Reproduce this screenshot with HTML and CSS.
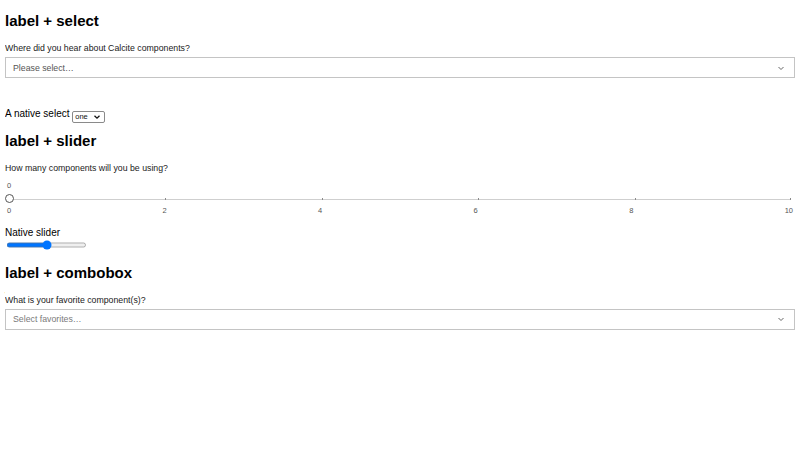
FILE: index.html
```html
<!DOCTYPE html>
<html lang="en">
<head>
<meta charset="utf-8">
<title>Calcite labels</title>
<link rel="stylesheet" href="styles.css">
</head>
<body>
<h2 class="title first">label + select</h2>
<div class="field">
  <div class="label-text">Where did you hear about Calcite components?</div>
  <div class="box">
    <span class="placeholder">Please select…</span>
    <svg class="chev" viewBox="0 0 10 10" width="10" height="10"><path d="M2.5 4 L5 6.5 L7.5 4" fill="none" stroke="#555" stroke-width="0.9"/></svg>
  </div>
</div>
<div class="native-row">A native select <span class="nsel"><select class="native-select"><option>one</option><option>two</option></select><svg class="nchev" viewBox="0 0 8 8" width="8" height="8"><path d="M1.5 2.8 L4 5.2 L6.5 2.8" fill="none" stroke="#111" stroke-width="1.3"/></svg></span></div>

<h2 class="title">label + slider</h2>
<div class="field">
  <div class="label-text">How many components will you be using?</div>
  <div class="slider">
    <div class="handle-label">0</div>
    <div class="track">
      <span class="tick t0"></span><span class="tick t2"></span><span class="tick t4"></span><span class="tick t6"></span><span class="tick t8"></span><span class="tick t10"></span>
      <span class="handle"></span>
    </div>
    <div class="tick-labels">
      <span>0</span><span>2</span><span>4</span><span>6</span><span>8</span><span>10</span>
    </div>
  </div>
</div>
<div class="native-slider">
  <div class="native-text">Native slider</div>
  <input class="range" type="range" min="0" max="100" value="50">
</div>

<h2 class="title">label + combobox</h2>
<div class="field">
  <div class="label-text">What is your favorite component(s)?</div>
  <div class="box combo">
    <span class="placeholder light">Select favorites…</span>
    <svg class="chev" viewBox="0 0 10 10" width="10" height="10"><path d="M2.5 4 L5 6.5 L7.5 4" fill="none" stroke="#555" stroke-width="0.9"/></svg>
  </div>
</div>
</body>
</html>
```
FILE: styles.css
```css
html, body { background: #fff; }
body {
  margin: 5px;
  font-family: "Liberation Sans", Arial, sans-serif;
  color: #000;
}
.title {
  font-size: 15px;
  font-weight: bold;
  margin: 9.5px 0 12.5px;
  line-height: 17px;
}
.title.first {
  margin-top: 6.5px;
  margin-bottom: 13.5px;
}
.field {
  margin-bottom: 7.5px;
}
.label-text {
  font-size: 8.75px;
  color: #1a1a1a;
  line-height: 12px;
  margin-bottom: 3px;
}
.box {
  box-sizing: border-box;
  height: 21px;
  border: 1px solid #c4c4c4;
  display: flex;
  align-items: center;
  justify-content: space-between;
  padding: 0 8px 0 7px;
}
.placeholder {
  font-size: 8.75px;
  color: #555;
}
.placeholder.light { color: #7a7a7a; }
.chev { display: block; }
.native-row {
  margin-top: 30px;
  font-size: 10px;
  line-height: 12px;
}
.nsel {
  display: inline-flex;
  align-items: center;
  box-sizing: border-box;
  width: 33px;
  height: 12px;
  border: 1px solid #8a8a8a;
  border-radius: 2px;
  vertical-align: -2px;
  padding: 0 3px 0 2px;
  justify-content: space-between;
}
.native-select {
  appearance: none;
  -webkit-appearance: none;
  border: none;
  background: transparent;
  padding: 0;
  margin: 0;
  font-family: "Liberation Sans", Arial, sans-serif;
  font-size: 7.5px;
  color: #111;
  width: 18px;
  outline: none;
}
.nchev { display: block; }
.slider {
  padding: 0 4px;
  margin-top: 7px;
}
.handle-label {
  font-size: 7.5px;
  color: #555;
  line-height: 9px;
  width: 8px;
  text-align: center;
  margin-left: -4px;
}
.track {
  position: relative;
  height: 1px;
  background: #cfcfcf;
  margin: 9px 0 6px;
}
.tick {
  position: absolute;
  top: -1px;
  width: 1px;
  height: 2px;
  background: #8a8a8a;
}
.t0 { left: 0; }
.t2 { left: 20%; }
.t4 { left: 40%; }
.t6 { left: 60%; }
.t8 { left: 80%; }
.t10 { left: calc(100% - 1px); }
.handle {
  position: absolute;
  left: -4.5px;
  top: -4.5px;
  width: 7px;
  height: 7px;
  border: 1.25px solid #555;
  border-radius: 50%;
  background: #fff;
}
.tick-labels {
  display: flex;
  justify-content: space-between;
  font-size: 7.5px;
  color: #555;
  line-height: 9px;
  margin: 0 -2px;
}
.native-slider {
  margin-top: 12px;
  padding-bottom: 5px;
}
.native-text {
  font-size: 10px;
  line-height: 12px;
}
.range {
  zoom: 0.625;
  margin: 2px 2px 0;
  display: block;
}
```
